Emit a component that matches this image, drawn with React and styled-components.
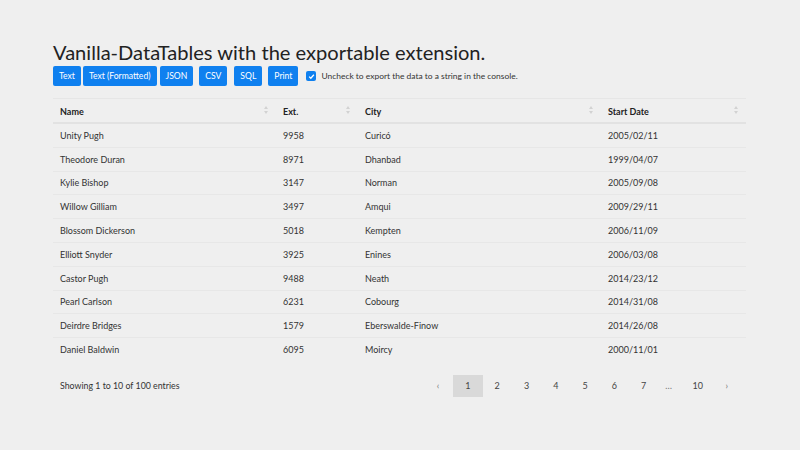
import React from 'react';
import styled, { createGlobalStyle } from 'styled-components';

const GlobalStyle = createGlobalStyle`
  html, body {
    margin: 0;
    padding: 0;
    background: #efefef;
  }
  body {
    font-family: Lato, "Open Sans", sans-serif;
    color: #333;
  }
`

const Page = styled.div`
  width: 800px;
  height: 450px;
  box-sizing: border-box;
  padding: 39px 53px 0 53px;
`

const Title = styled.h1`
  font-size: 20.1px;
  font-weight: 400;
  color: #222;
  margin: 0;
  line-height: 27px;
`

const Toolbar = styled.div`
  display: flex;
  align-items: center;
  height: 20px;
`

const Button = styled.button`
  font-family: Lato, sans-serif;
  font-size: 8.6px;
  color: #fff;
  background: #0f80ef;
  border: none;
  border-radius: 2px;
  height: 20px;
  padding: 0 ${props => props.$pad || 6}px;
  margin-right: ${props => props.$gap || 3}px;
  cursor: pointer;
`

const Check = styled.span`
  width: 10px;
  height: 10px;
  border-radius: 2px;
  background: #0f80ef;
  display: inline-flex;
  align-items: center;
  justify-content: center;
  margin-left: 5px;
  margin-right: 5px;
`

const CheckLabel = styled.label`
  font-size: 8.45px;
  color: #333;
  display: flex;
  align-items: center;
`

const Table = styled.table`
  width: 693px;
  border-collapse: collapse;
  margin-top: 12px;
  font-size: 9px;
  table-layout: fixed;
`

const Th = styled.th`
  width: ${props => props.$w - 14}px;
  text-align: left;
  font-weight: 700;
  color: #222;
  height: 22px;
  padding: 1px 7px 0;
  position: relative;
  border-top: 1px solid #e6e6e6;
  border-bottom: 2px solid #e2e2e2;
`

const SortIcon = styled.span`
  position: absolute;
  right: 8px;
  top: 7px;
  display: flex;
  flex-direction: column;
  gap: 2px;

  &::before, &::after {
    content: '';
    display: block;
    border-left: 2.5px solid transparent;
    border-right: 2.5px solid transparent;
  }
  &::before {
    border-bottom: 3px solid #d2d2d2;
  }
  &::after {
    border-top: 3px solid #d2d2d2;
  }
`

const Td = styled.td`
  padding: 0 7px;
  height: 22.8px;
  color: #333;
  border-bottom: 1px solid #e7e7e7;
  white-space: nowrap;
`

const Row = styled.tr`
  &:last-child td {
    border-bottom: none;
  }
`

const Footer = styled.div`
  display: flex;
  align-items: center;
  justify-content: space-between;
  margin-top: 14px;
  width: 693px;
  height: 22px;
`

const Info = styled.div`
  font-size: 8.8px;
  padding-left: 7px;
  color: #333;
`

const Pager = styled.ul`
  display: flex;
  list-style: none;
  margin: 0 9px 0 0;
  padding: 0;
`

const PageItem = styled.li`
  width: ${props => props.$w}px;
  height: 22px;
  display: flex;
  align-items: center;
  justify-content: center;
  font-size: 9px;
  color: ${props => (props.$muted ? '#777' : '#444')};
  background: ${props => (props.$active ? '#d9d9d9' : 'transparent')};
  box-sizing: border-box;
`

const rows = [
  ['Unity Pugh', '9958', 'Curicó', '2005/02/11'],
  ['Theodore Duran', '8971', 'Dhanbad', '1999/04/07'],
  ['Kylie Bishop', '3147', 'Norman', '2005/09/08'],
  ['Willow Gilliam', '3497', 'Amqui', '2009/29/11'],
  ['Blossom Dickerson', '5018', 'Kempten', '2006/11/09'],
  ['Elliott Snyder', '3925', 'Enines', '2006/03/08'],
  ['Castor Pugh', '9488', 'Neath', '2014/23/12'],
  ['Pearl Carlson', '6231', 'Cobourg', '2014/31/08'],
  ['Deirdre Bridges', '1579', 'Eberswalde-Finow', '2014/26/08'],
  ['Daniel Baldwin', '6095', 'Moircy', '2000/11/01'],
]

const columns = [
  { label: 'Name', w: 223 },
  { label: 'Ext.', w: 82 },
  { label: 'City', w: 243 },
  { label: 'Start Date', w: 145 },
]

const pages = [
  { label: '‹', w: 30.7, muted: true },
  { label: '1', w: 29.3, active: true },
  { label: '2', w: 29.3 },
  { label: '3', w: 29.3 },
  { label: '4', w: 29.3 },
  { label: '5', w: 29.3 },
  { label: '6', w: 29.3 },
  { label: '7', w: 29.3 },
  { label: '…', w: 20.7, muted: true },
  { label: '10', w: 37.3 },
  { label: '›', w: 20.7, muted: true },
]

const App = () => {
  return (
    <Page>
      <GlobalStyle />
      <Title>Vanilla-DataTables with the exportable extension.</Title>
      <Toolbar>
        <Button $gap={2}>Text</Button>
        <Button $gap={3}>Text (Formatted)</Button>
        <Button $gap={6}>JSON</Button>
        <Button $gap={7}>CSV</Button>
        <Button $gap={6}>SQL</Button>
        <Button $gap={3}>Print</Button>
        <CheckLabel>
          <Check>
            <svg width="7" height="7" viewBox="0 0 8 8">
              <path d="M1.3 4.2 L3.2 6 L6.7 2" stroke="#fff" strokeWidth="1.4" fill="none" />
            </svg>
          </Check>
          Uncheck to export the data to a string in the console.
        </CheckLabel>
      </Toolbar>
      <Table>
        <thead>
          <tr>
            {columns.map(c => (
              <Th key={c.label} $w={c.w}>
                {c.label}
                <SortIcon />
              </Th>
            ))}
          </tr>
        </thead>
        <tbody>
          {rows.map(r => (
            <Row key={r[0]}>
              {r.map((cell, i) => (
                <Td key={i}>{cell}</Td>
              ))}
            </Row>
          ))}
        </tbody>
      </Table>
      <Footer>
        <Info>Showing 1 to 10 of 100 entries</Info>
        <Pager>
          {pages.map((p, i) => (
            <PageItem key={i} $w={p.w} $active={p.active} $muted={p.muted}>
              {p.label}
            </PageItem>
          ))}
        </Pager>
      </Footer>
    </Page>
  )
}

export default App
